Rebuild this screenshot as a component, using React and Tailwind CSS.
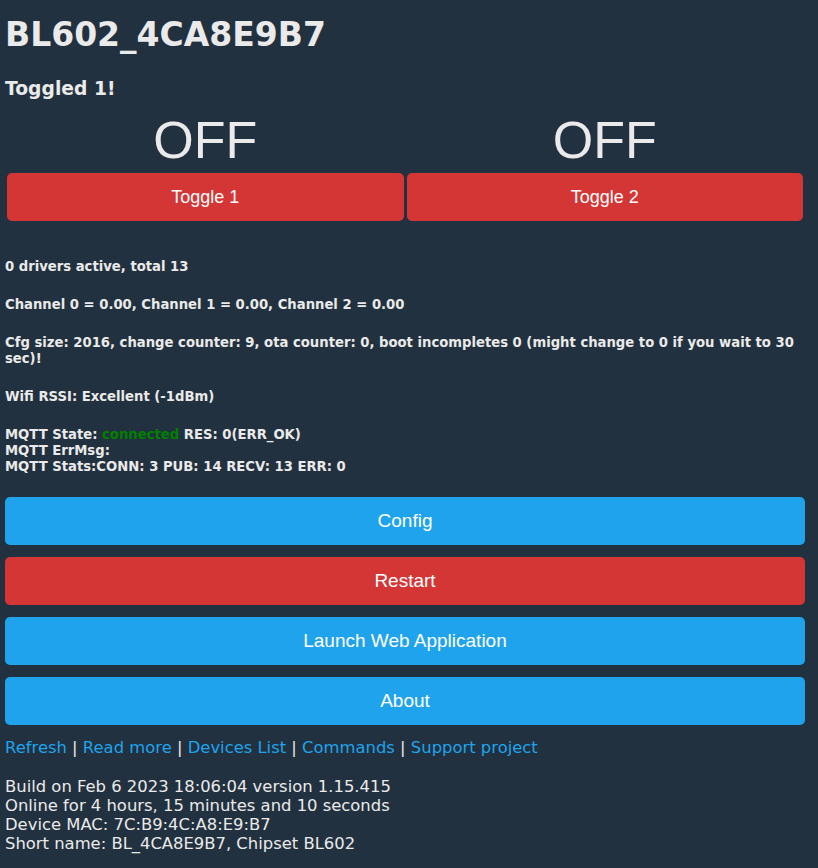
import React from 'react';

const links = ['Refresh', 'Read more', 'Devices List', 'Commands', 'Support project'];

const buttons = [
  { label: 'Config', color: 'bg-[#1fa3ec]' },
  { label: 'Restart', color: 'bg-[#d43535]' },
  { label: 'Launch Web Application', color: 'bg-[#1fa3ec]' },
  { label: 'About', color: 'bg-[#1fa3ec]' },
];

export default function App() {
  return (
    <div className="min-h-screen bg-[#22313f] text-[#eaeaea] font-['DejaVu_Sans','Verdana',sans-serif]">
      <div className="w-[800px] ml-[5px] pb-[8px]">
        <h1 className="pt-[16px] text-[33px] leading-[38px] font-bold">BL602_4CA8E9B7</h1>
        <h3 className="mt-[24px] text-[18.72px] leading-[21px] font-bold">Toggled 1!</h3>

        {/* relays */}
        <div className="mt-[11px] grid grid-cols-2 gap-[3px] px-[2px]">
          {[1, 2].map((n) => (
            <div key={n} className="flex flex-col items-center">
              <div className="font-['Liberation_Sans',Arial,sans-serif] text-[52px] leading-[60px]">OFF</div>
              <button className="mt-[3px] w-full h-[48px] rounded-[5px] bg-[#d43535] text-white text-[18px] font-['Liberation_Sans',Arial,sans-serif]">
                Toggle {n}
              </button>
            </div>
          ))}
        </div>

        {/* status */}
        <div className="mt-[38px] flex flex-col gap-[22px] text-[13.2px] leading-[16px] font-bold">
          <h5>0 drivers active, total 13</h5>
          <h5>Channel 0 = 0.00, Channel 1 = 0.00, Channel 2 = 0.00</h5>
          <h5>
            Cfg size: 2016, change counter: 9, ota counter: 0, boot incompletes 0 (might change to 0 if you wait to 30
            sec)!
          </h5>
          <h5>Wifi RSSI: Excellent (-1dBm)</h5>
          <h5>
            MQTT State: <span className="text-[#008000]">connected</span> RES: 0(ERR_OK)
            <br />
            MQTT ErrMsg:
            <br />
            MQTT Stats:CONN: 3 PUB: 14 RECV: 13 ERR: 0
          </h5>
        </div>

        <div className="mt-[22px] flex flex-col gap-[12px]">
          {buttons.map((b) => (
            <button
              key={b.label}
              className={`w-full h-[48px] rounded-[5px] ${b.color} text-white text-[19px] font-['Liberation_Sans',Arial,sans-serif]`}
            >
              {b.label}
            </button>
          ))}
        </div>

        <div className="mt-[13px] text-[16.4px] leading-[20px]">
          {links.map((l, i) => (
            <React.Fragment key={l}>
              {i > 0 && <span> | </span>}
              <a href="#" className="text-[#1fa3ec]">{l}</a>
            </React.Fragment>
          ))}
        </div>

        <div className="mt-[19px] text-[16.4px] leading-[19px]">
          Build on Feb 6 2023 18:06:04 version 1.15.415
          <br />
          Online for 4 hours, 15 minutes and 10 seconds
          <br />
          Device MAC: 7C:B9:4C:A8:E9:B7
          <br />
          Short name: BL_4CA8E9B7, Chipset BL602
        </div>
      </div>
    </div>
  );
}
